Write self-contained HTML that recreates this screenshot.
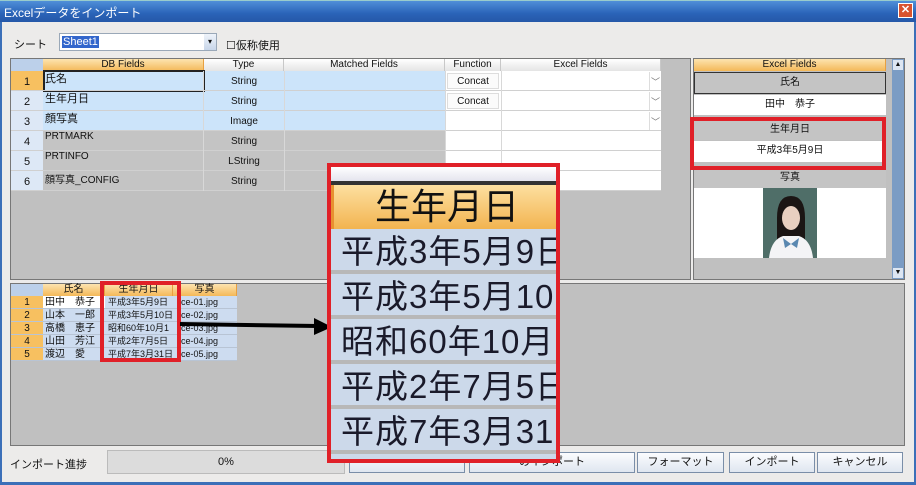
<!DOCTYPE html>
<html><head><meta charset="utf-8"><style>
*{box-sizing:border-box;margin:0;padding:0}
body{width:916px;height:485px;overflow:hidden;background:#ecebea;font-family:"Liberation Sans","Noto Sans CJK JP",sans-serif;font-size:11px;color:#111;position:relative}
.a{position:absolute}
.title{left:0;top:0;width:916px;height:22px;background:linear-gradient(#4f8fd8,#2a63b8 60%,#2558a8);color:#fff;font-size:12px;padding:3px 4px;border-top:1px solid #9cc}
.close{right:3px;top:3px;width:15px;height:15px;background:#d9532f;border:1px solid #fff;color:#fff;font-size:11px;line-height:12px;text-align:center;font-weight:bold}
.c{position:absolute;text-align:center;line-height:20px}
.hdr{background:linear-gradient(#fde4b0,#f4b858);border-right:1px solid #e8a040}
.gh{background:linear-gradient(#fff,#e4e4e4);border-right:1px solid #c8c8c8}
.btn{position:absolute;top:452px;height:21px;border:1px solid #7a8ea8;background:linear-gradient(#fbfcfe,#dfe6f0);text-align:center;line-height:19px;font-size:11px}
.lrow{position:absolute;height:13px;line-height:13px;font-size:10px}
</style></head><body>
<div class="a title">Excelデータをインポート</div>
<div class="a close">✕</div>
<div class="a" style="left:0;top:22px;width:2px;height:463px;background:#3b6fb8"></div>
<div class="a" style="right:0;top:22px;width:2px;height:463px;background:#3b6fb8"></div>
<div class="a" style="left:0;top:482px;width:916px;height:3px;background:#3b6fb8"></div>

<div class="a" style="left:14px;top:36px;font-size:11px">シート</div>
<div class="a" style="left:59px;top:33px;width:158px;height:18px;background:#fff;border:1px solid #9aa8b8"><span style="background:#3366cc;color:#fff;margin:2px;display:inline-block;padding:0 1px">Sheet1</span></div>
<div class="a" style="left:204px;top:34px;width:12px;height:16px;background:linear-gradient(#eef3fa,#c8d6ea);font-size:8px;text-align:center;line-height:16px">▾</div>
<div class="a" style="left:226px;top:37px;font-size:11px">☐仮称使用</div>

<div class="a" style="left:10px;top:58px;width:681px;height:222px;background:#c0c0c0;border:1px solid #777"></div>
<div class="a" style="left:11px;top:59px;width:650px;height:132px;background:#fff"></div>
<div class="c" style="left:11px;top:59px;width:32px;height:12px;background:#bcd0ea"></div>
<div class="c hdr" style="left:43px;top:59px;width:161px;height:12px;line-height:12px;font-size:10px">DB Fields</div>
<div class="c gh" style="left:204px;top:59px;width:80px;height:12px;line-height:12px;font-size:10px">Type</div>
<div class="c gh" style="left:284px;top:59px;width:161px;height:12px;line-height:12px;font-size:10px">Matched Fields</div>
<div class="c gh" style="left:445px;top:59px;width:56px;height:12px;line-height:12px;font-size:10px">Function</div>
<div class="c gh" style="left:501px;top:59px;width:160px;height:12px;line-height:12px;font-size:10px">Excel Fields</div>
<div class="a" style="left:11px;top:71px;width:434px;height:60px;background:#cce4fa"></div>
<div class="a" style="left:11px;top:131px;width:434px;height:60px;background:#c4c4c4"></div>
<div class="a" style="left:11px;top:71px;width:32px;height:120px;background:#dde8f6"></div>
<div class="a" style="left:11px;top:71px;width:32px;height:20px;background:#f7c060"></div>
<div class="a" style="left:43px;top:70px;width:162px;height:22px;border:2px solid #222"></div>
<div class="a" style="left:11px;top:71px;width:650px;height:120px;background:repeating-linear-gradient(transparent 0 19px,#d0d0d0 19px 20px)"></div>
<div class="a" style="left:203px;top:71px;width:1px;height:120px;background:#d8d8d8"></div>
<div class="a" style="left:284px;top:71px;width:1px;height:120px;background:#d8d8d8"></div>
<div class="a" style="left:445px;top:71px;width:1px;height:120px;background:#d8d8d8"></div>
<div class="a" style="left:501px;top:71px;width:1px;height:120px;background:#d8d8d8"></div>
<div class="c" style="left:11px;top:72px;width:32px">1</div><div class="c" style="left:11px;top:92px;width:32px">2</div><div class="c" style="left:11px;top:112px;width:32px">3</div><div class="c" style="left:11px;top:132px;width:32px">4</div><div class="c" style="left:11px;top:152px;width:32px">5</div><div class="c" style="left:11px;top:172px;width:32px">6</div>
<div class="a" style="left:45px;top:70px">氏名</div><div class="a" style="left:45px;top:90px">生年月日</div><div class="a" style="left:45px;top:110px">顔写真</div><div class="a" style="left:45px;top:131px;font-size:10px">PRTMARK</div><div class="a" style="left:45px;top:151px;font-size:10px">PRTINFO</div><div class="a" style="left:45px;top:171px;font-size:10px">顔写真_CONFIG</div>
<div class="c" style="left:204px;top:72px;width:80px;font-size:10px">String</div><div class="c" style="left:204px;top:92px;width:80px;font-size:10px">String</div><div class="c" style="left:204px;top:112px;width:80px;font-size:10px">Image</div><div class="c" style="left:204px;top:132px;width:80px;font-size:10px">String</div><div class="c" style="left:204px;top:152px;width:80px;font-size:10px">LString</div><div class="c" style="left:204px;top:172px;width:80px;font-size:10px">String</div>
<div class="c" style="left:447px;top:73px;width:52px;height:16px;line-height:16px;border:1px solid #ddd;background:#fbfbfb;font-size:10px">Concat</div>
<div class="c" style="left:447px;top:93px;width:52px;height:16px;line-height:16px;border:1px solid #ddd;background:#fbfbfb;font-size:10px">Concat</div>
<div class="c" style="left:649px;top:72px;width:12px;height:18px;color:#777;font-size:9px;border-left:1px solid #ddd">﹀</div>
<div class="c" style="left:649px;top:92px;width:12px;height:18px;color:#777;font-size:9px;border-left:1px solid #ddd">﹀</div>
<div class="c" style="left:649px;top:112px;width:12px;height:18px;color:#777;font-size:9px;border-left:1px solid #ddd">﹀</div>

<div class="a" style="left:693px;top:58px;width:212px;height:222px;background:#c0c0c0;border:1px solid #777"></div>
<div class="a" style="left:892px;top:59px;width:12px;height:220px;background:#7b9cc4"></div>
<div class="a" style="left:893px;top:60px;width:10px;height:10px;background:#dde6f2;font-size:7px;text-align:center;line-height:10px">▲</div>
<div class="a" style="left:893px;top:268px;width:10px;height:10px;background:#dde6f2;font-size:7px;text-align:center;line-height:10px">▼</div>
<div class="c hdr" style="left:694px;top:59px;width:192px;height:12px;line-height:12px;font-size:10px">Excel Fields</div>
<div class="c" style="left:694px;top:72px;width:192px;height:22px;background:#c4c4c4;border:1px solid #333;line-height:20px;font-size:10px">氏名</div>
<div class="c" style="left:694px;top:95px;width:192px;height:20px;background:#fff;font-size:10px">田中　恭子</div>
<div class="c" style="left:694px;top:120px;width:192px;height:20px;background:#c4c4c4;font-size:10px">生年月日</div>
<div class="c" style="left:694px;top:141px;width:192px;height:21px;background:#fff;font-size:10px">平成3年5月9日</div>
<div class="c" style="left:694px;top:168px;width:192px;height:20px;background:#c4c4c4;font-size:10px">写真</div>
<div class="a" style="left:694px;top:188px;width:192px;height:70px;background:#fff"></div>
<svg class="a" style="left:763px;top:188px" width="54" height="70" viewBox="0 0 54 70"><rect width="54" height="70" fill="#4f6e68"/><path d="M14 70 L14 30 Q14 8 28 8 Q42 8 42 30 L42 70Z" fill="#1b1514"/><ellipse cx="28" cy="30" rx="9" ry="12" fill="#e8cfc0"/><path d="M6 70 Q8 52 20 48 L36 48 Q48 52 50 70Z" fill="#f4f4f6"/><path d="M20 50 L28 56 L36 50 L34 60 L28 56 L22 60Z" fill="#5a88b0"/></svg>
<div class="a" style="left:690px;top:117px;width:196px;height:53px;border:4px solid #e02028"></div>

<div class="a" style="left:10px;top:283px;width:895px;height:163px;background:#c0c0c0;border:1px solid #777"></div>
<div class="a" style="left:11px;top:284px;width:32px;height:12px;background:#bcd0ea"></div>
<div class="c hdr" style="left:43px;top:284px;width:62px;height:12px;line-height:12px;font-size:10px">氏名</div>
<div class="c hdr" style="left:105px;top:284px;width:68px;height:12px;line-height:12px;font-size:10px">生年月日</div>
<div class="c hdr" style="left:173px;top:284px;width:64px;height:12px;line-height:12px;font-size:10px">写真</div>
<div class="a" style="left:11px;top:296px;width:32px;height:65px;background:#f7c060"></div>
<div class="a" style="left:43px;top:296px;width:194px;height:65px;background:#cddcf0"></div>
<div class="a" style="left:43px;top:296px;width:62px;height:13px;background:#fff"></div>
<div class="a" style="left:11px;top:296px;width:226px;height:65px;background:repeating-linear-gradient(transparent 0 12px,#b8c4d4 12px 13px)"></div>
<div class="lrow c" style="left:11px;top:296px;width:32px">1</div><div class="lrow c" style="left:11px;top:309px;width:32px">2</div><div class="lrow c" style="left:11px;top:322px;width:32px">3</div><div class="lrow c" style="left:11px;top:335px;width:32px">4</div><div class="lrow c" style="left:11px;top:348px;width:32px">5</div>
<div class="lrow" style="left:45px;top:296px">田中　恭子</div><div class="lrow" style="left:45px;top:309px">山本　一郎</div><div class="lrow" style="left:45px;top:322px">高橋　恵子</div><div class="lrow" style="left:45px;top:335px">山田　芳江</div><div class="lrow" style="left:45px;top:348px">渡辺　愛</div>
<div class="lrow" style="left:108px;top:296px;font-size:9px">平成3年5月9日</div><div class="lrow" style="left:108px;top:309px;font-size:9px">平成3年5月10日</div><div class="lrow" style="left:108px;top:322px;font-size:9px">昭和60年10月1</div><div class="lrow" style="left:108px;top:335px;font-size:9px">平成2年7月5日</div><div class="lrow" style="left:108px;top:348px;font-size:9px">平成7年3月31日</div>
<div class="lrow" style="left:181px;top:296px;font-size:9px">ce-01.jpg</div><div class="lrow" style="left:181px;top:309px;font-size:9px">ce-02.jpg</div><div class="lrow" style="left:181px;top:322px;font-size:9px">ce-03.jpg</div><div class="lrow" style="left:181px;top:335px;font-size:9px">ce-04.jpg</div><div class="lrow" style="left:181px;top:348px;font-size:9px">ce-05.jpg</div>
<div class="a" style="left:100px;top:281px;width:81px;height:81px;border:4px solid #e02028"></div>
<svg class="a" style="left:178px;top:316px" width="155" height="20"><line x1="2" y1="8" x2="140" y2="10" stroke="#000" stroke-width="4"/><polygon points="136,2 154,11 136,19" fill="#000"/></svg>

<div class="a" style="left:10px;top:456px;font-size:11px">インポート進捗</div>
<div class="a" style="left:107px;top:450px;width:238px;height:24px;background:#dcdcdc;border:1px solid #bbb;text-align:center;line-height:22px">0%</div>
<div class="btn" style="left:349px;width:116px"></div>
<div class="btn" style="left:469px;width:166px">のインポート</div>
<div class="btn" style="left:637px;width:87px">フォーマット</div>
<div class="btn" style="left:729px;width:86px">インポート</div>
<div class="btn" style="left:817px;width:86px">キャンセル</div>

<div class="a" style="left:327px;top:163px;width:233px;height:300px;border:4px solid #e02028;background:#d0dbe8;overflow:hidden">
 <div class="a" style="left:0;top:0;width:229px;height:14px;background:linear-gradient(#fff,#e4e4ee)"></div>
 <div class="a" style="left:0;top:14px;width:229px;height:4px;background:#333"></div>
 <div class="a" style="left:0;top:18px;width:229px;height:44px;background:linear-gradient(#fde0a0,#f2b450);border-left:3px solid #e89030;text-align:center;line-height:44px;font-size:36px">生年月日</div>
 <div class="a" style="left:0;top:62px;width:229px;height:234px;background:repeating-linear-gradient(#ccd9ea 0 41px,#b8b8b8 41px 45px)"></div>
 <div class="a" style="left:10px;top:62px;font-size:33px;line-height:45px;white-space:nowrap;color:#1a1a2a;letter-spacing:1px">平成3年5月9日<br>平成3年5月10日<br>昭和60年10月1日<br>平成2年7月5日<br>平成7年3月31日</div>
 <div class="a" style="left:225px;top:62px;width:4px;height:234px;background:#ccd9ea"></div>
</div>
</body></html>
